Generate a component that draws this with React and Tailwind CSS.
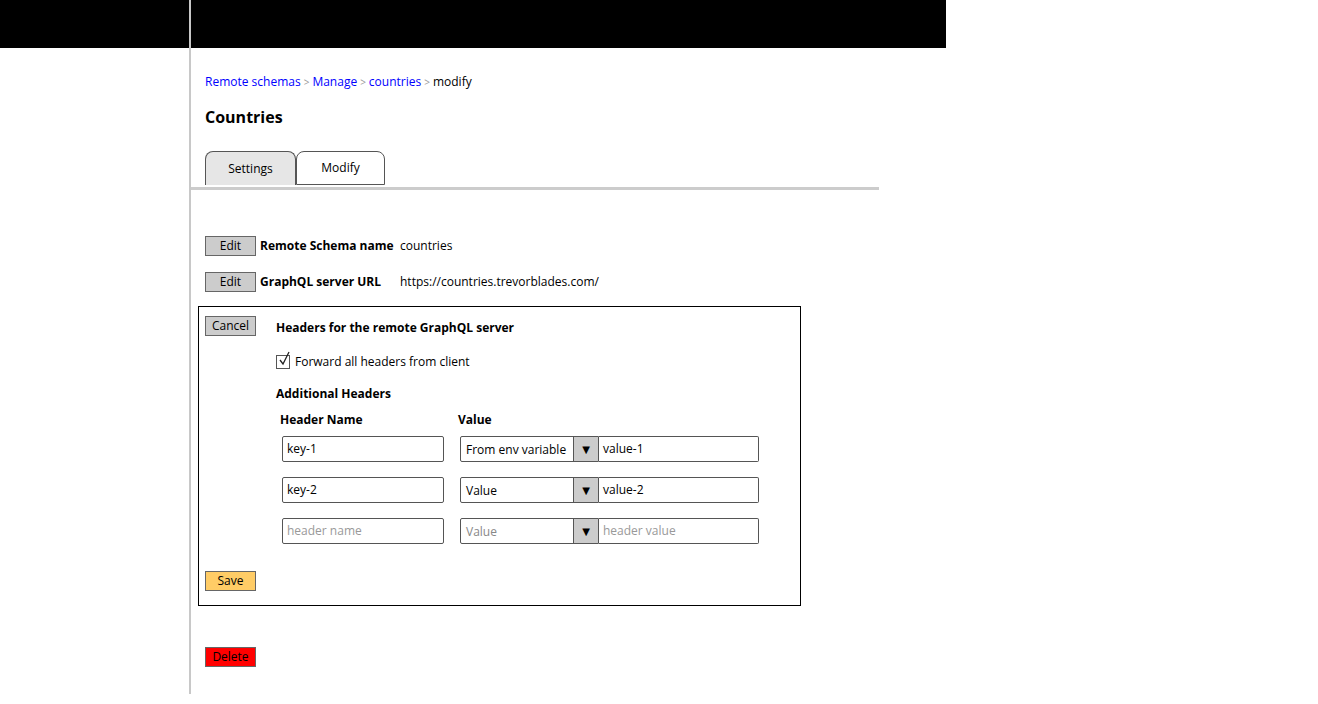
import React from 'react';

const font = { fontFamily: '"Comic Sans MS", "Open Sans", "DejaVu Sans", sans-serif' };

const Btn = ({ children, className = '' }) => (
  <button className={`w-[51px] h-[20px] border border-[#666] text-[12px] leading-none flex items-center justify-center text-black ${className}`}>
    {children}
  </button>
);

const Field = ({ value, placeholder, className = '' }) => (
  <div className={`h-[26px] border-[1.5px] border-[#555] rounded-[2px] flex items-center px-[4px] text-[12px] bg-white ${className}`}>
    {value ? <span className="text-black">{value}</span> : <span className="text-[#999]">{placeholder}</span>}
  </div>
);

const Select = ({ label, muted }) => (
  <div className="w-[139px] h-[26px] border-[1.5px] border-[#555] rounded-l-[2px] flex items-center bg-white">
    <span className={`flex-1 pl-[5px] pt-[2px] text-[12px] ${muted ? 'text-[#888]' : 'text-black'}`}>{label}</span>
    <div className="w-[25px] h-full bg-[#ccc] border-l-[1.5px] border-[#555] flex items-center justify-center text-[10px] text-black">▼</div>
  </div>
);

const HeaderRow = ({ name, placeholder, type, value, valuePlaceholder, muted }) => (
  <div className="flex items-center">
    <Field value={name} placeholder={placeholder} className="w-[162px] ml-[6px]" />
    <div className="flex ml-[16px]">
      <Select label={type} muted={muted} />
      <Field value={value} placeholder={valuePlaceholder} className="w-[160px] border-l-0 rounded-l-none" />
    </div>
  </div>
);

export default function App() {
  return (
    <div className="w-[1318px] h-[704px] bg-white flex" style={font}>
      <div className="w-[189px]">
        <div className="h-[48px] bg-black" />
      </div>
      <div className="w-[2px] h-[694px] bg-[#c8c8c8]" />
      <div className="w-[755px]">
        <div className="h-[48px] bg-black" />

        <div className="pl-[14px] pt-[26px] text-[12px] leading-[16px] flex items-center gap-[3px]">
          <span className="text-[#0000ff]">Remote schemas</span>
          <span className="text-[#999] text-[10px]">&gt;</span>
          <span className="text-[#0000ff]">Manage</span>
          <span className="text-[#999] text-[10px]">&gt;</span>
          <span className="text-[#0000ff]">countries</span>
          <span className="text-[#999] text-[10px]">&gt;</span>
          <span className="text-black">modify</span>
        </div>

        <h1 className="pl-[14px] mt-[17px] text-[16px] leading-[20px] font-bold text-black">Countries</h1>

        <div className="pl-[14px] mt-[24px] flex items-end h-[34px]">
          <div className="w-[91px] h-[34px] bg-[#e6e6e6] border-[1.5px] border-b-0 border-[#555] rounded-t-[8px] flex items-center justify-center text-[12px] text-black">
            Settings
          </div>
          <div className="w-[89px] h-[34px] bg-white border-[1.5px] border-[#555] rounded-t-[8px] flex items-center justify-center text-[12px] text-black">
            Modify
          </div>
        </div>
        <div className="mt-[2px] w-[688px] h-[3px] bg-[#cccccc]" />

        <div className="pl-[14px] mt-[46px] flex items-center text-[12px] text-black">
          <Btn className="bg-[#cccccc]">Edit</Btn>
          <span className="ml-[4px] w-[140px] font-bold">Remote Schema name</span>
          <span>countries</span>
        </div>
        <div className="pl-[14px] mt-[16px] flex items-center text-[12px] text-black">
          <Btn className="bg-[#cccccc]">Edit</Btn>
          <span className="ml-[4px] w-[140px] font-bold">GraphQL server URL</span>
          <span>https://countries.trevorblades.com/</span>
        </div>

        <div className="ml-[7px] mt-[14px] w-[603px] h-[300px] border border-black flex">
          <div className="pl-[6px] pt-[9px] w-[77px] flex flex-col justify-between pb-[14px]">
            <Btn className="bg-[#cccccc]">Cancel</Btn>
            <Btn className="bg-[#ffcc66]">Save</Btn>
          </div>
          <div className="flex-1 text-[12px] text-black">
            <div className="mt-[13px] font-bold leading-[16px]">Headers for the remote GraphQL server</div>
            <div className="mt-[18px] flex items-center gap-[5px] leading-[16px]">
              <span className="w-[14px] h-[14px] border-[1.5px] border-[#555] flex items-center justify-center relative">
                <svg width="14" height="16" viewBox="0 0 14 16" className="absolute -top-[6px] left-[0px]">
                  <path d="M3 10 L6 14 L12 2" fill="none" stroke="#222" strokeWidth="1.3" />
                </svg>
              </span>
              <span>Forward all headers from client</span>
            </div>
            <div className="mt-[16px] font-bold leading-[16px]">Additional Headers</div>
            <div className="mt-[10px] flex font-bold leading-[16px]">
              <span className="ml-[4px] w-[178px]">Header Name</span>
              <span>Value</span>
            </div>
            <div className="mt-[8px] flex flex-col gap-[15px]">
              <HeaderRow name="key-1" type="From env variable" value="value-1" />
              <HeaderRow name="key-2" type="Value" value="value-2" />
              <HeaderRow placeholder="header name" type="Value" valuePlaceholder="header value" muted />
            </div>
          </div>
        </div>

        <div className="pl-[14px] mt-[41px]">
          <Btn className="bg-[#ff0000]">Delete</Btn>
        </div>
      </div>
    </div>
  );
}
